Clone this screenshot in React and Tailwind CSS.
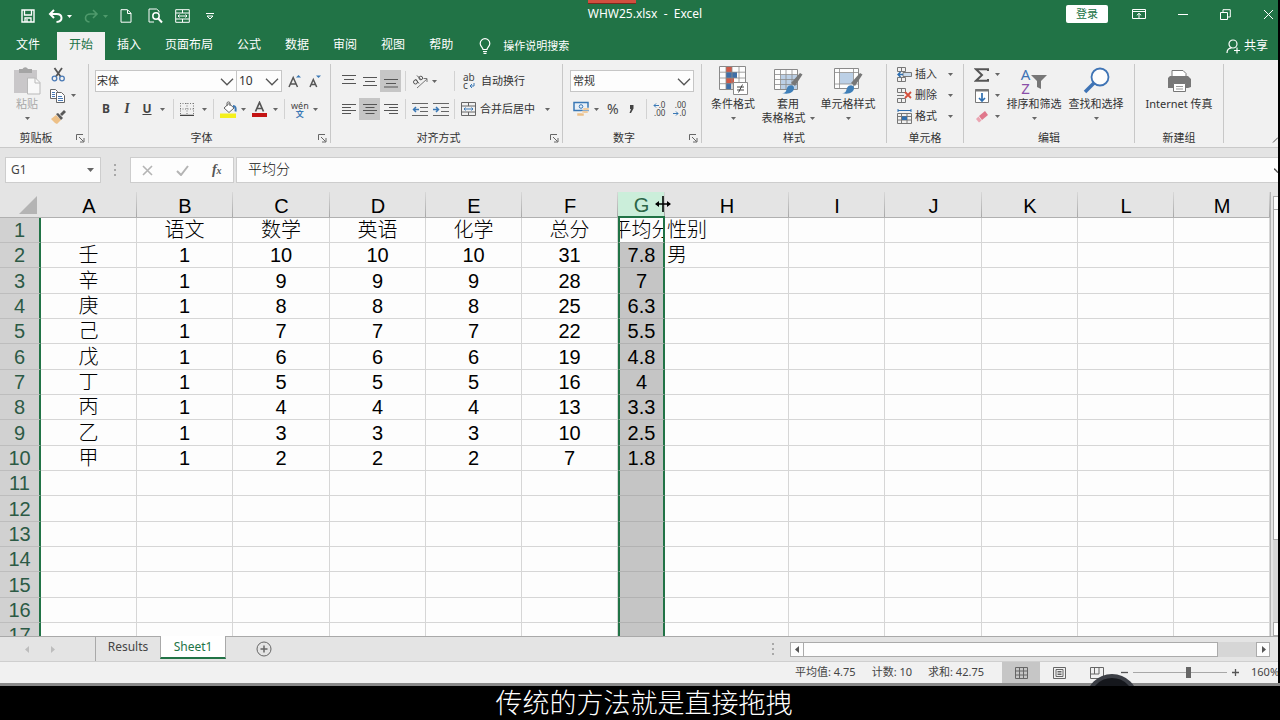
import { useState } from "react";
import clsx from "clsx";

const columns = [
    { name: "A", width: "w-[96px]" },
    { name: "B", width: "w-[96px]" },
    { name: "C", width: "w-[97px]" },
    { name: "D", width: "w-[96px]" },
    { name: "E", width: "w-[96px]" },
    { name: "F", width: "w-[96px]" },
    { name: "G", width: "w-[47px]" },
    { name: "H", width: "w-[124px]" },
    { name: "I", width: "w-[96px]" },
    { name: "J", width: "w-[97px]" },
    { name: "K", width: "w-[96px]" },
    { name: "L", width: "w-[96px]" },
    { name: "M", width: "" },
];

const cells = [
    ["", "语文", "数学", "英语", "化学", "总分", "平均分", "性别"],
    ["壬", "1", "10", "10", "10", "31", "7.8", "男"],
    ["辛", "1", "9", "9", "9", "28", "7"],
    ["庚", "1", "8", "8", "8", "25", "6.3"],
    ["己", "1", "7", "7", "7", "22", "5.5"],
    ["戊", "1", "6", "6", "6", "19", "4.8"],
    ["丁", "1", "5", "5", "5", "16", "4"],
    ["丙", "1", "4", "4", "4", "13", "3.3"],
    ["乙", "1", "3", "3", "3", "10", "2.5"],
    ["甲", "1", "2", "2", "2", "7", "1.8"],
    [], [], [], [], [], [], [],
];

const tabs = ["文件", "开始", "插入", "页面布局", "公式", "数据", "审阅", "视图", "帮助"];

const Svg = ({ w = 16, h = 16, className, children, ...rest }) => (
    <svg width={w} height={h} viewBox={`0 0 ${w} ${h}`} fill="none" stroke="currentColor" className={clsx("shrink-0", className)} aria-hidden="true" {...rest}>
        {children}
    </svg>
);

const Caret = ({ className = "text-[#666666]" }) => (
    <Svg w={5} h={3} className={className}><path d="M0 0h5L2.5 3z" fill="currentColor" stroke="none" /></Svg>
);

const Chevron = () => (
    <Svg w={14} h={8} className="pointer-events-none absolute right-[3px] top-[8px] text-[#555555]"><path d="M1 .8l6 6 6-6" strokeWidth="1.3" /></Svg>
);

const IconButton = ({ label, className, children }) => (
    <button type="button" aria-label={label} title={label} className={clsx("flex shrink-0 items-center justify-center", className)}>
        {children}
    </button>
);

/* ---------- quick access toolbar and title ---------- */

const TitleBar = () => (
    <div className="grid h-8 shrink-0 grid-cols-[1fr_auto_1fr] text-white">
        <div className="flex items-center pl-5">
            <IconButton label="保存" className="mr-3 w-4">
                <Svg w={14} h={14}><path d="M1 1h12v12H1z" strokeWidth="1.4" /><path d="M3.500 1v5h7V1M4 13V9h6v4M6 10v3" strokeWidth="1.300" /></Svg>
            </IconButton>
            <IconButton label="撤消" className="gap-1">
                <Svg w={15} h={14}><path d="M6 1L2 5l4 4M2 5h6.500c3 0 5 1.500 5 4s-2 3.800-5 4" strokeWidth="2" /></Svg>
                <Caret className="text-white" />
            </IconButton>
            <IconButton label="恢复" className="ml-3 gap-1 text-[#4f9a6c]">
                <Svg w={15} h={14}><path d="M9 1l4 4-4 4M13 5H6.500c-3 0-5 1.500-5 4s2 3.800 4 4" strokeWidth="1.600" /></Svg>
                <Caret className="text-[#4f9a6c]" />
            </IconButton>
            <IconButton label="新建" className="ml-3 w-3">
                <Svg w={12} h={14}><path d="M1 .700h6.500L11 4.200v9H1zM7.500 1v3.500H11" /></Svg>
            </IconButton>
            <IconButton label="打印预览" className="ml-4">
                <Svg w={15} h={16}><path d="M11 4.500V3L8.500 1H1v13h5" /><circle cx="8" cy="8" r="3.200" strokeWidth="1.500" /><path d="M10.300 10.500l3.700 4" strokeWidth="2" /></Svg>
            </IconButton>
            <IconButton label="记录单" className="ml-3">
                <Svg w={15} h={14}><path d="M.7.700h13.600v12.600H.700zM1 4h13M1 10h13M7.500 1v3M7.500 10v3M3 7h9M4.500 5.500L3 7l1.500 1.500M10.500 5.500L12 7l-1.500 1.500" /></Svg>
            </IconButton>
            <IconButton label="自定义快速访问工具栏" className="ml-4">
                <Svg w={8} h={7}><path d="M0 .500h8M1 3l3 3 3-3z" /></Svg>
            </IconButton>
        </div>
        <div className="relative flex items-center pb-1 pl-3 text-xs">
            <span className="absolute left-3 top-0 h-1 w-12 border-b border-[#7a2a1e] bg-[#d24f3f]" />
            <h1 className="whitespace-pre">WHW25.xlsx  -  Excel</h1>
        </div>
        <div className="flex items-center justify-end pb-1 pr-1">
            <button type="button" className="mr-6 h-[18px] rounded-xs bg-white px-[10px] text-[11px] leading-[18px] text-[#217346]">登录</button>
            <IconButton label="功能区显示选项" className="mr-8">
                <Svg w={14} h={10}><path d="M.5.500h13v9H.500zM.500 2.500h13M7 9V4.500M4.800 6.300L7 4.300l2.200 2" /></Svg>
            </IconButton>
            <IconButton label="最小化" className="mr-8"><Svg w={10} h={10}><path d="M0 5.500h10" /></Svg></IconButton>
            <IconButton label="还原" className="mr-8">
                <Svg w={11} h={11}><path d="M.5 3.500h7v7h-7zM3 3V.700h7.300V8H8" /></Svg>
            </IconButton>
            <IconButton label="关闭"><Svg w={11} h={11}><path d="M1 1l9 9M10 1l-9 9" /></Svg></IconButton>
        </div>
    </div>
);

const RibbonTabs = ({ active, onSelect }) => (
    <nav className="flex h-7 shrink-0 items-stretch pl-1 text-xs text-white">
        {tabs.map((tab) => (
            <button
                key={tab}
                type="button"
                onClick={() => onSelect(tab)}
                className={clsx("px-3 pb-0.5", tab === "文件" && "mr-[5px]", tab === active && "bg-[#f1f1f1] text-[#217346]")}
            >
                {tab}
            </button>
        ))}
        <label className="ml-3.5 flex items-center gap-3 text-[11px]">
            <Svg w={12} h={16}><path d="M4 11.500c0-2-2.800-3-2.800-6a4.800 4.800 0 019.600 0c0 3-2.800 4-2.800 6zM4 13.500h4M4.500 15.300h3" strokeWidth="1.200" /></Svg>
            <input aria-label="操作说明搜索" placeholder="操作说明搜索" className="w-32 bg-transparent placeholder:text-white focus:outline-none" />
        </label>
        <button type="button" className="ml-auto flex items-center gap-1 pr-[10px]">
            <Svg w={14} h={15}><circle cx="7" cy="5" r="4" strokeWidth="1.200" /><path d="M1 14c0-3 2-5 4.500-5.200M8 11.500h6M11 8.500v6" strokeWidth="1.200" /></Svg>
            共享
        </button>
    </nav>
);

/* ---------- ribbon ---------- */

const Group = ({ title, launcher, className, children }) => (
    <section className="flex shrink-0 pt-1">
        <div className={clsx("flex flex-col", className)}>
            <div className="flex flex-1 items-start">{children}</div>
            <div className="mb-0.5 flex h-[14px] items-center">
                <h2 className="flex-1 text-center text-[11px] leading-[14px] text-[#333333]">{title}</h2>
                {launcher && (
                    <IconButton label={`${title}设置`} className="w-4 text-[#666666]">
                        <Svg w={9} h={9}><path d="M.5 6V.500H7M3 3l4.500 4.500M8 4v4H4" /></Svg>
                    </IconButton>
                )}
            </div>
        </div>
        <div className="mb-1 w-px bg-[#c8c8c8]" />
    </section>
);

const Divider = () => <div className="h-5 w-px shrink-0 bg-[#d2d2d2]" />;

const BigButton = ({ label, second, className, children }) => (
    <button type="button" className={clsx("flex flex-col items-center text-[11px] leading-[14px]", className)}>
        <span className="flex h-[33px] items-center">{children}</span>
        <span className="whitespace-nowrap">{label}</span>
        {second === undefined
            ? null
            : <span className="flex h-[14px] items-center gap-1 whitespace-nowrap">{second}<Caret /></span>}
    </button>
);

const Clipboard = () => (
    <Group title="剪贴板" launcher className="w-[88px]">
        <BigButton label="粘贴" second="" className="ml-[10px] w-[34px] text-[#a8a8a8]">
            <Svg w={28} h={29} stroke="none">
                <path d="M1 4h23v23H1z" fill="#c9c7c9" />
                <path d="M6 3h3.500a3 3 0 015.500 0h4v4H6z" fill="#a5a5a5" />
                <path d="M14.500 12h8l4.500 4.500V28H14.500z" fill="#f8f8f8" stroke="#b9b9b9" />
                <path d="M22 12v5h5" stroke="#b9b9b9" />
            </Svg>
        </BigButton>
        <div className="ml-1 flex flex-col items-start pl-[2px]">
            <IconButton label="剪切" className="h-[21px] w-4">
                <Svg w={15} h={15}><path d="M3.500 1l6 8.500M11 1L5 9.500" stroke="#555555" strokeWidth="1.800" /><circle cx="3.500" cy="11.500" r="2.300" stroke="#4a7ab5" strokeWidth="1.300" /><circle cx="11" cy="11.500" r="2.300" stroke="#4a7ab5" strokeWidth="1.300" /></Svg>
            </IconButton>
            <IconButton label="复制" className="h-[21px] gap-1.5">
                <Svg w={15} h={14} stroke="#666666"><path d="M.5.500h5l2 2v7h-7z" fill="#fff" /><path d="M6.500 3.500h5l3 3v7h-8z" fill="#fff" /><path d="M2 3.500h3M2 5.500h3M2 7.500h3M8 7.500h4M8 9.500h5M8 11.500h5" stroke="#4a7ab5" /></Svg>
                <Caret />
            </IconButton>
            <IconButton label="格式刷" className="h-[21px] w-4">
                <Svg w={16} h={14} stroke="none"><path d="M1 9l5-4 5 5-4 4-2-1-1-1z" fill="#edc087" /><path d="M6 4l2-1 5 5-2 2z" fill="#595959" /><path d="M10 4l4-4 2 2-4 4z" fill="#595959" /></Svg>
            </IconButton>
        </div>
    </Group>
);

const FontGroup = () => (
    <Group title="字体" launcher className="w-[241px]">
        <div className="flex flex-col gap-[6px] pt-[6px]">
            <div className="flex h-[22px] items-center pl-[6px]">
                <div className="relative">
                    <select aria-label="字体" className="block h-[22px] w-[142px] appearance-none border border-[#c6c6c6] bg-[#fdfdfd] px-px text-[11px]">
                        <option>宋体</option>
                    </select>
                    <Chevron />
                </div>
                <div className="relative -ml-px">
                    <select aria-label="字号" className="block h-[22px] w-[46px] appearance-none border border-[#c6c6c6] bg-[#fdfdfd] px-[2px] text-xs">
                        <option>10</option>
                    </select>
                    <Chevron />
                </div>
                <IconButton label="增大字号" className="ml-1.5 text-[#555555]">
                    <Svg w={13} h={14}><path d="M1 13L5.200 3.500 9.500 13M2.500 10h5.500" strokeWidth="1.500" /><path d="M8 3.500L10.500 1 13 3.500z" fill="#3a78b5" stroke="none" /></Svg>
                </IconButton>
                <IconButton label="减小字号" className="ml-2 text-[#555555]">
                    <Svg w={12} h={14}><path d="M1 13l3.300-7.500L7.700 13M2.200 10.500h4.200" strokeWidth="1.500" /><path d="M7 1.500h5L9.500 4z" fill="#3a78b5" stroke="none" /></Svg>
                </IconButton>
            </div>
            <div className="flex h-[22px] items-center pl-2 text-[#444444]">
                <IconButton label="加粗" className="w-[18px] text-xs font-bold">B</IconButton>
                <IconButton label="倾斜" className="ml-[3px] w-[18px] font-['Liberation_Serif',serif] text-sm font-bold italic">I</IconButton>
                <IconButton label="下划线" className="ml-0.5 gap-1"><span className="w-[18px] text-xs font-bold underline">U</span><Caret /></IconButton>
                <div className="ml-2"><Divider /></div>
                <IconButton label="边框" className="ml-1.5 gap-2">
                    <Svg w={14} h={13}><path d="M0 .500h14M0 6h14M.500 0v12M7 0v12M13.500 0v12" stroke="#777777" strokeDasharray="1 1.500" /><path d="M0 12.500h14" strokeWidth="1.500" /></Svg>
                    <Caret />
                </IconButton>
                <div className="ml-1.5"><Divider /></div>
                <IconButton label="填充颜色" className="ml-1.5 gap-1">
                    <Svg w={17} h={17}><path d="M4 7l5-4.500 5 4.500-5 4.500z" fill="#fff" stroke="#666666" /><path d="M7 5V2c0-1.500 3-1.500 3 0v3" stroke="#666666" /><path d="M13 5c2.500 0 3 2 2.500 5.500" stroke="#3a78b5" strokeWidth="2" /><path d="M0 12.500h16V17H0z" fill="#f4f01c" stroke="none" /></Svg>
                    <Caret />
                </IconButton>
                <IconButton label="字体颜色" className="ml-1.5 gap-1.5">
                    <Svg w={15} h={16}><path d="M3.500 10.500L7.500 1.500l4 9M5 7.500h5" stroke="#555555" strokeWidth="1.700" /><path d="M0 12h15v4H0z" fill="#c41414" stroke="none" /></Svg>
                    <Caret />
                </IconButton>
                <div className="ml-1.5"><Divider /></div>
                <IconButton label="拼音指南" className="ml-1.5 gap-1">
                    <span className="flex flex-col items-center text-[9px] leading-[9px]">wén<span className="text-[8px] font-bold leading-[8px] text-[#3a78b5]">文</span></span>
                    <Caret />
                </IconButton>
            </div>
        </div>
    </Group>
);

const Lines = ({ d }) => <Svg w={14} h={14} className="text-[#555555]"><path d={d} /></Svg>;

const AlignGroup = () => (
    <Group title="对齐方式" launcher className="w-[231px]">
        <div className="grid grid-cols-[auto_auto] gap-y-[6px] pl-[7px] pt-[6px] text-[11px]">
            <div className="flex h-[22px] items-center">
                <IconButton label="顶端对齐" className="h-[22px] w-[21px]"><Lines d="M0 1.500h14M2 5.500h10M0 9.500h14" /></IconButton>
                <IconButton label="垂直居中" className="h-[22px] w-[21px]"><Lines d="M0 3.500h14M2 7.500h10M0 11.500h14" /></IconButton>
                <IconButton label="底端对齐" className="h-[22px] w-[21px] bg-[#c6c6c6]"><Lines d="M0 5.500h14M2 9.500h10M0 13h14" /></IconButton>
                <div className="ml-1"><Divider /></div>
                <IconButton label="方向" className="ml-1.5 gap-1">
                    <Svg w={16} h={15} className="text-[#555555]"><circle cx="3.500" cy="8" r="2" /><path d="M3.500 5l3.500 4.500M5 1.500L9.500 6" /><circle cx="8.800" cy="4" r="1.800" /><path d="M5 14L15 5M11.500 4.500H15V8" stroke="#777777" /></Svg>
                    <Caret />
                </IconButton>
            </div>
            <div className="flex items-center">
                <Divider />
                <button type="button" className="ml-2 flex items-center gap-1 whitespace-nowrap">
                    <span className="flex w-[14px] flex-col text-left text-[10px] leading-[8px] text-[#444444]">
                        ab
                        <span className="flex items-center gap-px">c<Svg w={6} h={5} className="text-[#3a78b5]"><path d="M5 0v3H1M3 1L1 3l2 2" /></Svg></span>
                    </span>
                    自动换行
                </button>
            </div>
            <div className="flex h-[22px] items-center">
                <IconButton label="左对齐" className="h-[22px] w-[21px]"><Lines d="M0 2.500h14M0 5.500h9M0 8.500h14M0 11.500h9" /></IconButton>
                <IconButton label="居中" className="h-[22px] w-[21px] bg-[#c6c6c6]"><Lines d="M0 2.500h14M2.500 5.500h9M0 8.500h14M2.500 11.500h9" /></IconButton>
                <IconButton label="右对齐" className="h-[22px] w-[21px]"><Lines d="M0 2.500h14M5 5.500h9M0 8.500h14M5 11.500h9" /></IconButton>
                <div className="ml-1"><Divider /></div>
                <IconButton label="减少缩进量" className="ml-1.5">
                    <Svg w={16} h={13} className="text-[#666666]"><path d="M0 .500h16M8 4.500h8M8 8.500h8M0 12.500h16" /><path d="M7 6.500H1.500M4 4L1.500 6.500 4 9" stroke="#3a78b5" strokeWidth="1.500" /></Svg>
                </IconButton>
                <IconButton label="增加缩进量" className="ml-[5px] mr-[5px]">
                    <Svg w={16} h={13} className="text-[#666666]"><path d="M0 .500h16M8 4.500h8M8 8.500h8M0 12.500h16" /><path d="M0 6.500h5.500M3 4l2.500 2.500L3 9" stroke="#3a78b5" strokeWidth="1.500" /></Svg>
                </IconButton>
            </div>
            <div className="flex items-center">
                <Divider />
                <button type="button" className="ml-1.5 flex items-center gap-1 whitespace-nowrap">
                    <Svg w={15} h={14} className="text-[#666666]"><path d="M.5.500h14v13H.500zM.500 4h14M.500 10h14M7.500.500V4M7.500 10v3.500" /><path d="M3 7h9M4.500 5.500L3 7l1.500 1.500M10.500 5.500L12 7l-1.500 1.500" stroke="#3a78b5" /></Svg>
                    合并后居中
                    <span className="pl-1.5"><Caret /></span>
                </button>
            </div>
        </div>
    </Group>
);

const NumberGroup = () => (
    <Group title="数字" launcher className="w-[138px]">
        <div className="flex flex-col gap-[6px] pl-[7px] pt-[6px]">
            <div className="relative">
                <select aria-label="数字格式" className="block h-[22px] w-[124px] appearance-none border border-[#c6c6c6] bg-[#fdfdfd] px-[2px] text-[11px]">
                    <option>常规</option>
                </select>
                <Chevron />
            </div>
            <div className="flex h-[22px] items-center pl-[3px] text-[#444444]">
                <IconButton label="会计数字格式" className="gap-1">
                    <Svg w={17} h={16}><path d="M1 1.500h14v8H1z" stroke="#3a78b5" strokeWidth="1.500" fill="#e8f0f8" /><circle cx="8" cy="5.500" r="1.800" stroke="#3a78b5" /><path d="M10 7h6v2h-6zM9 10h6v2H9zM4 12h7v3H4z" fill="#edc087" stroke="#f1f1f1" strokeWidth=".5" /></Svg>
                    <Caret />
                </IconButton>
                <IconButton label="百分比样式" className="ml-2 text-sm">%</IconButton>
                <IconButton label="千位分隔样式" className="ml-2.5"><Svg w={5} h={8}><path d="M1 0h3.500v3.500L2 8H.500L2 4H1z" fill="#444444" stroke="none" /></Svg></IconButton>
                <div className="ml-3"><Divider /></div>
                <IconButton label="增加小数位数" className="ml-1.5">
                    <span className="flex flex-col items-end text-[8px] leading-[8px]">
                        <span className="flex items-center"><Svg w={6} h={5} className="text-[#3a78b5]"><path d="M6 2.500H1M3 .500l-2 2 2 2" /></Svg>.0</span>
                        <span>.00</span>
                    </span>
                </IconButton>
                <IconButton label="减少小数位数" className="ml-2">
                    <span className="flex flex-col items-end text-[8px] leading-[8px]">
                        <span>.00</span>
                        <span className="flex items-center"><Svg w={6} h={5} className="text-[#3a78b5]"><path d="M0 2.500h5M3 .500l2 2-2 2" /></Svg>.0</span>
                    </span>
                </IconButton>
            </div>
        </div>
    </Group>
);

const Brush = () => (
    <>
        <path d="M17 16L26 6l2.500 1.500L21 19z" fill="#777777" stroke="none" />
        <path d="M8 26c4 0 4-2 5-5 2-4 7-3 7 0 0 4-5 7-12 5z" fill="#3f7fb8" stroke="none" />
    </>
);

const StyleGroup = () => (
    <Group title="样式" className="w-[184px]">
        <BigButton label="条件格式" second="" className="ml-[6px] w-[50px]">
            <Svg w={29} h={29} className="text-[#8a8a8a]">
                <path d="M.5.500h26v23H.500z" fill="#fdfdfd" />
                <path d="M7 1h6v5H7zM7 12h8v5H7z" fill="#cf5a48" stroke="none" />
                <path d="M7 6h11v6H7zM7 17h5v6H7z" fill="#3f6fa8" stroke="none" />
                <path d="M7 .500v23M13 .500v23M20 .500v23M.500 6.200h26M.500 12h26M.500 17.700h26" strokeWidth=".8" />
                <path d="M14.500 16.500h14v12h-14z" fill="#fff" />
                <path d="M18 21h7M18 24h7M23.500 18.500l-4 8" stroke="#444444" />
            </Svg>
        </BigButton>
        <BigButton label="套用" second="表格格式" className="ml-0.5 w-[56px]">
            <Svg w={29} h={28} className="text-[#8a8a8a]">
                <path d="M.5 2.500h23v20H.500z" fill="#fdfdfd" />
                <path d="M7 8h16v14H7z" fill="#bcd0e6" stroke="none" />
                <path d="M6.500 2.500v20M12 2.500v20M18 2.500v20M.500 7.500h23M.500 12.500h23M.500 17.500h23" strokeWidth=".8" />
                <Brush />
            </Svg>
        </BigButton>
        <BigButton label="单元格样式" second="" className="ml-[2px] w-[60px]">
            <Svg w={29} h={28} className="text-[#8a8a8a]">
                <path d="M.5 1.500h24v20H.500z" fill="#fdfdfd" />
                <path d="M6 6h13v11H6z" fill="#bcd0e6" stroke="none" />
                <path d="M5.500 1.500v20M19.500 1.500v20M.500 5.500h24M.500 17h24" strokeWidth=".8" />
                <Brush />
            </Svg>
        </BigButton>
    </Group>
);

const CellTool = ({ label, children }) => (
    <button type="button" className="flex h-[21px] items-center gap-[3px] text-[11px]">
        <Svg w={15} h={15} className="text-[#777777]">{children}</Svg>
        {label}
        <span className="pl-2"><Caret /></span>
    </button>
);

const CellGroup = () => (
    <Group title="单元格" className="w-[76px]">
        <div className="flex flex-col pl-[10px]">
            <CellTool label="插入"><path d="M.5.500h8v4h-8zM.500 10.500h8v4h-8zM4.500.500v4M4.500 10.500v4" /><path d="M6 5.500h8.500v4H6z" fill="#c8daec" /><path d="M6 7.500H1M3.500 5L1 7.500 3.500 10" stroke="#2f6fb0" strokeWidth="1.500" /></CellTool>
            <CellTool label="删除"><path d="M.5.500h8v4h-8zM.500 10.500h8v4h-8zM4.500.500v4M4.500 10.500v4M0 7.500h7" /><path d="M8 4l6 6M14 4l-6 6" stroke="#d5503c" strokeWidth="1.800" /></CellTool>
            <CellTool label="格式"><path d="M.5 4.500h14v10H.500zM.500 7.500h14M.500 11h14M4.500 4.500v10M10 4.500v10" /><path d="M5 7.500h5V11H5z" fill="#2f6fb0" stroke="none" /><path d="M1 1.500h13M1 0v3M14 0v3" stroke="#2f6fb0" /></CellTool>
        </div>
    </Group>
);

const EditGroup = () => (
    <Group title="编辑" className="w-[170px]">
        <div className="flex flex-col pl-[10px]">
            <IconButton label="自动求和" className="h-[21px] gap-1.5"><Svg w={15} h={14}><path d="M14 3V1.200H2L8 7l-6 5.800h12V11" stroke="#555555" strokeWidth="2" /></Svg><Caret /></IconButton>
            <IconButton label="填充" className="h-[21px] gap-1.5"><Svg w={14} h={14}><path d="M.5.500h13v13H.500z" stroke="#777777" fill="#fff" /><path d="M0 1.500h14" stroke="#777777" strokeWidth="2" /><path d="M7 4v8M4 9l3 3 3-3" stroke="#2f6fb0" strokeWidth="1.700" /></Svg><Caret /></IconButton>
            <IconButton label="清除" className="h-[21px] gap-1.5"><Svg w={14} h={12} stroke="none"><path d="M4 5l6-5 3 4-6 5z" fill="#e0788c" /><path d="M3.500 5.500l3 4L4 11.500 1 8z" fill="#eba5b2" /></Svg><Caret /></IconButton>
        </div>
        <BigButton label="排序和筛选" second="" className="ml-1 w-[60px]">
            <span className="flex">
                <span className="flex flex-col pr-px text-[15px] leading-[14px]"><span className="text-[#3f74b5]">A</span><span className="text-[#8a4fa8]">Z</span></span>
                <Svg w={16} h={16} className="mt-[7px]"><path d="M0 1h16l-6 6v8l-4-2V7z" fill="#777777" stroke="none" /></Svg>
            </span>
        </BigButton>
        <BigButton label="查找和选择" second="" className="ml-[2px] w-[60px]">
            <Svg w={27} h={27}><circle cx="17" cy="10" r="8.500" fill="#fdfdfd" stroke="#3f74b5" strokeWidth="1.800" /><path d="M11 16L2 25" stroke="#3f74b5" strokeWidth="3.500" /></Svg>
        </BigButton>
    </Group>
);

const FaxGroup = () => (
    <Group title="新建组" className="w-[88px]">
        <BigButton label="Internet 传真" className="w-[88px]">
            <Svg w={25} h={24}>
                <path d="M5 7V1.500h11l3 3V7" fill="#fff" stroke="#777777" />
                <path d="M1 9l2-2h18l3 3v8l-3 1h-3v-4H6v4H1z" fill="#777777" stroke="none" />
                <path d="M6.500 14.500h12v8h-12z" fill="#fff" stroke="#777777" /><path d="M9 17.500h7M9 20h7" stroke="#999999" />
            </Svg>
        </BigButton>
    </Group>
);

const Ribbon = () => (
    <div className="flex h-[88px] shrink-0 overflow-hidden border-b border-[#c9c9c9] bg-[#f1f1f1] text-[#333333]">
        <Clipboard />
        <FontGroup />
        <AlignGroup />
        <NumberGroup />
        <StyleGroup />
        <CellGroup />
        <EditGroup />
        <FaxGroup />
        <IconButton label="折叠功能区" className="ml-auto self-end pb-1 text-[#555555]"><Svg w={6} h={6}><path d="M1 5.500l5-5" /></Svg></IconButton>
    </div>
);

/* ---------- formula bar ---------- */

const Dots = () => (
    <Svg w={3} h={12} stroke="none" className="text-[#a8a8a8]"><path d="M0 0h2v2H0zM0 5h2v2H0zM0 10h2v2H0z" fill="currentColor" /></Svg>
);

const FormulaBar = () => (
    <div className="flex h-11 shrink-0 items-start pl-[5px] pt-[9px]">
        <div className="flex h-[26px] w-[96px] items-center border border-[#cdcdcd] bg-[#fdfdfd] pr-1.5">
            <input aria-label="名称框" defaultValue="G1" className="w-0 flex-1 bg-transparent px-[5px] text-xs text-[#444444] focus:outline-none" />
            <Svg w={7} h={4} className="text-[#666666]"><path d="M0 0h7L3.500 4z" fill="currentColor" stroke="none" /></Svg>
        </div>
        <div className="flex h-[26px] w-[29px] items-center justify-center"><Dots /></div>
        <div className="flex h-[26px] w-[104px] items-center justify-around border border-[#cdcdcd] bg-[#fdfdfd] text-[#b4b4b4]">
            <IconButton label="取消"><Svg w={11} h={11}><path d="M1 1l9 9M10 1l-9 9" strokeWidth="1.600" /></Svg></IconButton>
            <IconButton label="输入"><Svg w={13} h={11}><path d="M1 6l4 4 7-9" strokeWidth="2" /></Svg></IconButton>
            <IconButton label="插入函数" className="font-['Liberation_Serif',serif] text-sm font-bold italic text-[#555555]"><span>f<span className="text-[10px]">x</span></span></IconButton>
        </div>
        <div className="ml-[2px] flex h-[26px] flex-1 items-center border-y border-l border-[#cdcdcd] bg-[#fdfdfd]">
            <input aria-label="编辑栏" defaultValue="平均分" className="w-0 flex-1 bg-transparent px-[11px] pb-[3px] text-sm font-light text-[#111111] focus:outline-none" />
            <Svg w={4} h={5} className="text-[#555555]"><path d="M0 .500l4 4" strokeWidth="1.500" /></Svg>
        </div>
    </div>
);

/* ---------- sheet ---------- */

const ResizeCursor = () => (
    <Svg w={16} h={16} className="absolute -right-[6px] top-1 z-10 text-black">
        <path d="M8 0v16M1 8h14" strokeWidth="1.600" />
        <path d="M0 8l4-3v6zM16 8l-4-3v6z" fill="currentColor" stroke="none" />
    </Svg>
);

const Sheet = () => (
    <div className="flex min-h-0 flex-1">
        <div className="min-w-0 flex-1 overflow-hidden border-r border-[#b5b5b5]">
            <table className="w-full table-fixed border-separate border-spacing-0 text-center font-['Liberation_Sans','Noto_Sans_CJK_SC',sans-serif] text-xl leading-[24px] text-black">
                <colgroup>
                    <col className="w-[41px]" />
                    {columns.map((col) => <col key={col.name} className={col.width} />)}
                </colgroup>
                <thead>
                    <tr className="h-[26px] leading-[22px]">
                        <th aria-label="全选" className="border-b border-[#b0b0b0] p-0">
                            <Svg w={18} h={18} className="ml-auto mr-1 text-[#b4b4b4]"><path d="M18 0v18H0z" fill="currentColor" stroke="none" /></Svg>
                        </th>
                        {columns.map((col) => (
                            <th
                                key={col.name}
                                scope="col"
                                className={clsx("relative border-b p-0 pt-0.5 font-normal", col.name === "G" ? "border-b-2 border-[#217346] bg-[#cbeeda] text-[#2c6647]" : "border-[#b0b0b0]")}
                            >
                                {col.name}
                                {col.name === "G" && <ResizeCursor />}
                                <span className="absolute bottom-0 right-0 top-0 w-px bg-linear-to-b from-[#d8d8d8] to-[#a8a8a8]" />
                            </th>
                        ))}
                    </tr>
                </thead>
                <tbody>
                    {cells.map((row, r) => (
                        <tr key={r} className={r % 3 === 2 ? "h-[26px]" : "h-[25px]"}>
                            <th scope="row" className="border-b border-r-2 border-b-[#bdbdbd] border-r-[#217346] bg-[#d1d1d1] p-0 font-normal text-[#2c5a45]">{r + 1}</th>
                            {columns.map((col, c) => (
                                <td
                                    key={col.name}
                                    className={clsx(
                                        "whitespace-nowrap border-b p-0 font-light",
                                        col.name === "G" ? "border-x-2 border-b-[#b2b2b2] border-x-[#217346]" : "border-r border-[#d6d6d6]",
                                        col.name === "G" && r > 0 ? "bg-[#c5c5c5]" : "bg-[#fdfdfd]",
                                        col.name === "H" && "pl-0.5 text-left",
                                    )}
                                >
                                    {col.name === "G" && r === 0
                                        ? <div className="flex justify-center overflow-hidden">{row[c]}</div>
                                        : row[c]}
                                </td>
                            ))}
                        </tr>
                    ))}
                </tbody>
            </table>
        </div>
        <div className="flex w-[7px] shrink-0 flex-col overflow-hidden pl-[2px] pt-1">
            <div className="h-3.5 w-4 border border-[#ababab] bg-[#fdfdfd]" />
            <div className="w-4 flex-[4] border border-t-0 border-[#ababab] bg-[#fdfdfd]" />
            <div className="w-4 flex-1 bg-[#d6d6d6]" />
            <div className="h-3.5 w-4 border border-[#ababab] bg-[#fdfdfd]" />
        </div>
    </div>
);

const SheetTabs = () => (
    <div className="flex h-[26px] shrink-0 border-b border-t border-b-[#cfcfcf] border-t-[#a9a9a9] text-xs">
        <div className="flex w-24 items-center gap-5 border-r border-[#a9a9a9] pl-6 text-[#bdbdbd]">
            <IconButton label="上一张"><Svg w={6} h={7}><path d="M5 0v7L1 3.500z" fill="currentColor" stroke="none" /></Svg></IconButton>
            <IconButton label="下一张"><Svg w={6} h={7}><path d="M1 0v7l4-3.500z" fill="currentColor" stroke="none" /></Svg></IconButton>
        </div>
        <button type="button" className="w-16 pb-1 text-[#444444]">Results</button>
        <button type="button" className="-mt-px mb-[2px] w-[66px] border-x border-b-2 border-x-[#a9a9a9] border-b-[#217346] bg-white text-[#217346]">Sheet1</button>
        <IconButton label="新工作表" className="ml-[30px] text-[#666666]">
            <Svg w={16} h={16}><circle cx="8" cy="8" r="7" /><path d="M8 4.500v7M4.500 8h7" strokeWidth="1.500" /></Svg>
        </IconButton>
        <div className="ml-auto flex w-[506px] items-center pr-2">
            <Dots />
            <IconButton label="向左滚动" className="ml-[15px] h-[15px] w-[14px] border border-[#ababab] bg-[#fdfdfd] text-[#555555]"><Svg w={5} h={7}><path d="M4 0v7L0 3.500z" fill="currentColor" stroke="none" /></Svg></IconButton>
            <div className="flex h-[15px] flex-1 bg-[#d6d6d6]"><div className="w-11/12 border border-l-0 border-[#ababab] bg-[#fdfdfd]" /></div>
            <IconButton label="向右滚动" className="h-[15px] w-[14px] border border-[#ababab] bg-[#fdfdfd] text-[#555555]"><Svg w={5} h={7}><path d="M1 0v7l4-3.500z" fill="currentColor" stroke="none" /></Svg></IconButton>
        </div>
    </div>
);

const StatusBar = () => {
    const [zoom, setZoom] = useState(160);

    return (
        <div className="flex h-[21px] shrink-0 items-center justify-end bg-[#f1f1f1] text-[11px] text-[#444444]">
            <div className="mr-[18px] flex gap-4">
                <span>平均值: 4.75</span>
                <span>计数: 10</span>
                <span>求和: 42.75</span>
            </div>
            <IconButton label="普通" className="h-[21px] w-[38px] bg-[#c6c6c6]"><Svg w={13} h={12} className="text-[#666666]"><path d="M.5.500h12v11H.500zM4.500.500v11M8.500.500v11M.500 4h12M.500 8h12" /></Svg></IconButton>
            <IconButton label="页面布局" className="h-[21px] w-[38px]"><Svg w={13} h={12} className="text-[#666666]"><path d="M.5.500h12v11H.500zM3 2.500h7v7H3zM4.500 4.500h4M4.500 6h4M4.500 7.500h4" /></Svg></IconButton>
            <IconButton label="分页预览" className="h-[21px] w-[38px]"><Svg w={14} h={12} className="text-[#666666]"><path d="M.5.500h13v11H.500zM4.500.500V7M9 .500V7M.500 7H9" /></Svg></IconButton>
            <IconButton label="缩小" className="ml-1 text-[#555555]"><Svg w={9} h={9}><path d="M1 4.500h7" strokeWidth="1.300" /></Svg></IconButton>
            <input
                type="range"
                aria-label="缩放"
                min="10"
                max="260"
                value={zoom}
                onChange={(e) => setZoom(Number(e.target.value))}
                className="mx-1 h-3 w-[94px] appearance-none bg-[linear-gradient(#a8a8a8,#a8a8a8)] bg-[length:100%_1px] bg-center bg-no-repeat [&::-webkit-slider-thumb]:h-[11px] [&::-webkit-slider-thumb]:w-[5px] [&::-webkit-slider-thumb]:appearance-none [&::-webkit-slider-thumb]:bg-[#666666]"
            />
            <IconButton label="放大" className="text-[#555555]"><Svg w={9} h={9}><path d="M1 4.500h7M4.500 1v7" strokeWidth="1.300" /></Svg></IconButton>
            <span className="ml-[11px] w-[27px] overflow-hidden whitespace-nowrap">{zoom}%</span>
        </div>
    );
};

export default function App() {
    const [tab, setTab] = useState("开始");

    return (
        <div className="flex h-screen flex-col overflow-hidden bg-black font-['Noto_Sans','Noto_Sans_CJK_SC',sans-serif]">
            <main className="flex min-h-0 flex-1 flex-col border-r-2 border-black bg-[#e4e4e4]">
                <header className="shrink-0 bg-[#217346]">
                    <TitleBar />
                    <RibbonTabs active={tab} onSelect={setTab} />
                </header>
                <Ribbon />
                <FormulaBar />
                <Sheet />
                <SheetTabs />
                <StatusBar />
            </main>
            <div className="relative h-[3px] shrink-0 bg-[#8a8a8a]">
                <Svg w={52} h={12} className="absolute bottom-0 right-[142px]"><circle cx="26" cy="26" r="24" fill="#15171c" stroke="#3c3f46" strokeWidth="4" /></Svg>
            </div>
            <p className="h-[34px] shrink-0 pl-2 text-center text-[27px] font-light leading-[34px] text-white">传统的方法就是直接拖拽</p>
        </div>
    );
}
